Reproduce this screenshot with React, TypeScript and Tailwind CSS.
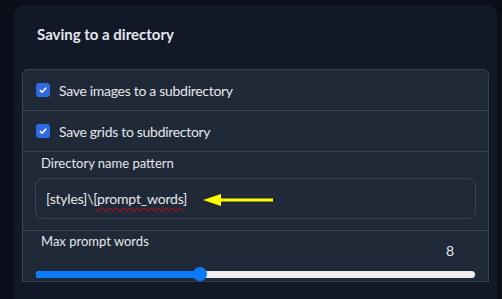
import React from "react";

function Check() {
  return (
    <span className="flex h-[14px] w-[14px] items-center justify-center rounded-[3px] bg-[#2f6ae6]">
      <svg width="10" height="10" viewBox="0 0 16 16" fill="none">
        <path d="M3.5 8.5l3 3 6-6.5" stroke="white" strokeWidth="2.4" strokeLinecap="round" strokeLinejoin="round" />
      </svg>
    </span>
  );
}

export default function App() {
  return (
    <div
      className="h-[299px] w-[502px] overflow-hidden bg-[#0b0f19] pl-[14px] pr-[5px] pt-[5px] text-[#e5e7eb]"
      style={{ fontFamily: "Lato, 'Noto Sans', sans-serif" }}
    >
      <div className="h-[320px] rounded-t-[10px] bg-[#111827] px-[8px]">
        <div className="flex h-[64px] items-start pl-[15px] pt-[19px]">
          <h2 className="text-[15px] font-bold leading-[20px] text-[#e5e7eb]">Saving to a directory</h2>
        </div>
        <div className="rounded-t-[6px] border border-[#374151] bg-[#1f2937]">
          <div className="flex h-[40px] items-center gap-[9px] pl-[13px] text-[14px] tracking-[-0.3px]">
            <Check />
            <span>Save images to a subdirectory</span>
          </div>
          <div className="h-px bg-[#374151]" />
          <div className="flex h-[40px] items-center gap-[9px] pl-[13px] text-[14px] tracking-[-0.3px]">
            <Check />
            <span>Save grids to subdirectory</span>
          </div>
          <div className="h-px bg-[#374151]" />
          <div className="flex h-[78px] flex-col px-[12px] pt-[2px]">
            <div className="pl-[6px] text-[13px] leading-[18px]">Directory name pattern</div>
            <div className="relative mt-[6px] flex h-[41px] items-center rounded-[8px] border border-[#374151] pl-[10px] text-[14px] tracking-[-0.2px]">
              <span>
                [styles]\[
                <span className="underline decoration-red-600 decoration-wavy decoration-1 underline-offset-[3px]">prompt_words</span>]
              </span>
              <svg className="absolute left-[167px] top-[14px]" width="72" height="14" viewBox="0 0 72 14">
                <polygon points="0,7 18,1 18,13" fill="#ffff00" />
                <rect x="17" y="5.5" width="53" height="3" fill="#ffff00" />
              </svg>
            </div>
          </div>
          <div className="h-px bg-[#374151]" />
          <div className="px-[12px] pt-[1px]">
            <div className="flex items-start justify-between">
              <div className="pl-[6px] text-[13px] leading-[18px]">Max prompt words</div>
              <div className="mr-[22px] mt-[10px] text-[14px] leading-[18px] text-[#e5e7eb]">8</div>
            </div>
            <div className="relative ml-[1px] mt-[7px] h-[14px] w-[439px]">
              <div className="absolute left-0 right-0 top-[3.5px] h-[7px] rounded-full bg-[#eeeeee]" />
              <div className="absolute left-0 top-[3.5px] h-[7px] w-[164px] rounded-full bg-[#0a7bff]" />
              <div className="absolute left-[157px] top-0 h-[14px] w-[14px] rounded-full bg-[#0a7bff]" />
            </div>
          </div>
        </div>
      </div>
    </div>
  );
}
